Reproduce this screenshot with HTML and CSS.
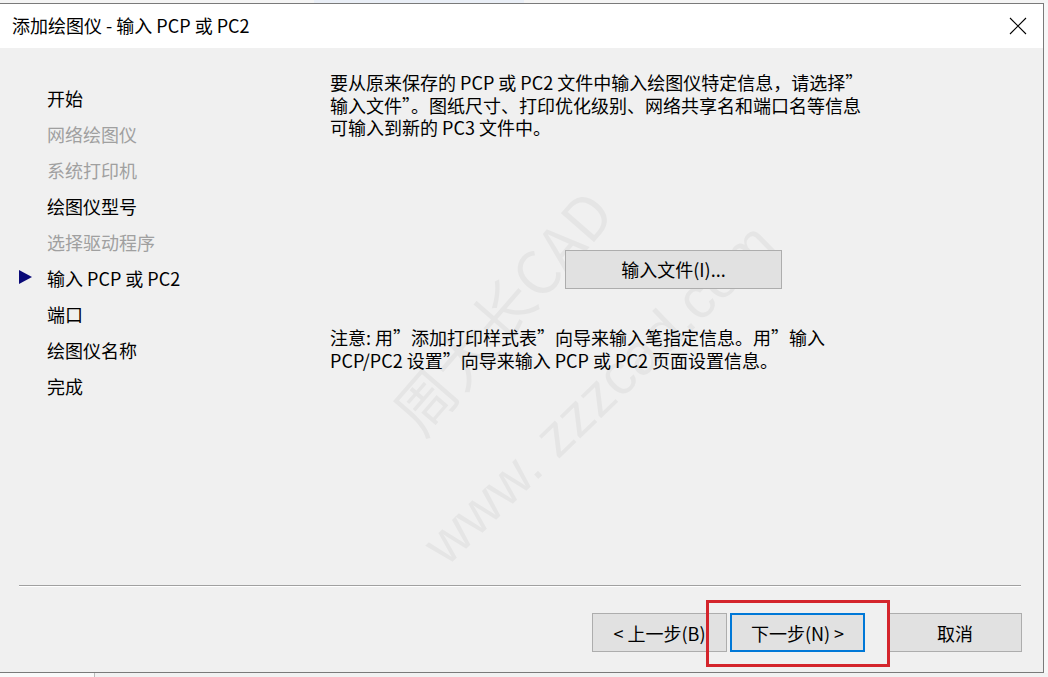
FILE: index.html
```html
<!DOCTYPE html>
<html lang="zh-CN">
<head>
<meta charset="utf-8">
<title>添加绘图仪 - 输入 PCP 或 PC2</title>
<link rel="stylesheet" href="styles.css">
</head>
<body>
<div class="screen">
  <div class="topstrip"></div>
  <div class="row">
    <div class="dialog">
      <div class="titlebar">
        <span class="title">添加绘图仪 - 输入 PCP 或 PC2</span>
        <span class="close">
          <svg width="18" height="18" viewBox="0 0 18 18"><path d="M1 1 L17 17 M17 1 L1 17" stroke="#000" stroke-width="1.1" fill="none"/></svg>
        </span>
      </div>
      <div class="body">
        <div class="watermark wm1">周大长CAD</div>
        <div class="watermark wm2">www. zzzcad.com</div>
        <div class="main">
          <ul class="nav">
            <li class="item"><span class="marker"></span>开始</li>
            <li class="item disabled"><span class="marker"></span>网络绘图仪</li>
            <li class="item disabled"><span class="marker"></span>系统打印机</li>
            <li class="item"><span class="marker"></span>绘图仪型号</li>
            <li class="item disabled"><span class="marker"></span>选择驱动程序</li>
            <li class="item current"><span class="marker"><svg width="13" height="14" viewBox="0 0 13 14"><polygon points="0,0 13,7 0,14" fill="#0a0a78"/></svg></span>输入 PCP 或 PC2</li>
            <li class="item"><span class="marker"></span>端口</li>
            <li class="item"><span class="marker"></span>绘图仪名称</li>
            <li class="item"><span class="marker"></span>完成</li>
          </ul>
          <div class="content">
            <p class="intro">要从原来保存的 PCP 或 PC2 文件中输入绘图仪特定信息，请选择”<br>输入文件”。图纸尺寸、打印优化级别、网络共享名和端口名等信息<br>可输入到新的 PC3 文件中。</p>
            <button class="btn import">输入文件(I)...</button>
            <p class="note">注意: 用”添加打印样式表”向导来输入笔指定信息。用”输入<br>PCP/PC2 设置”向导来输入 PCP 或 PC2 页面设置信息。</p>
          </div>
        </div>
        <div class="sep"></div>
        <div class="actions">
          <button class="btn">&lt; 上一步(B)</button>
          <button class="btn default">下一步(N) &gt;</button>
          <button class="btn cancel">取消</button>
        </div>
        <div class="highlight"></div>
      </div>
    </div>
    <div class="edge"></div>
  </div>
  <div class="bottomstrip"><div class="bs-left"></div><div class="bs-right"></div></div>
</div>
</body>
</html>
```
FILE: styles.css
```css
* { box-sizing: border-box; }
html, body { margin: 0; padding: 0; background: #fff; }
body {
  font-family: "Noto Sans CJK SC", "Microsoft YaHei", sans-serif;
  font-size: 18px;
  color: #000;
}
.screen {
  width: 1048px;
  height: 677px;
  display: flex;
  flex-direction: column;
  overflow: hidden;
}
.topstrip {
  height: 3px;
  background: linear-gradient(90deg, #f4f4f4 0 30%, #e9eef6 30% 50%, #f4f4f4 50% 100%);
}
.row { display: flex; height: 670px; }
.dialog {
  width: 1044px;
  height: 670px;
  border-top: 1px solid #7a7a7a;
  border-right: 1px solid #7a7a7a;
  border-bottom: 1px solid #7a7a7a;
  display: flex;
  flex-direction: column;
  background: #f0f0f0;
}
.edge { flex: 1; background: #f7f7f7; }
.titlebar {
  height: 44px;
  background: #fff;
  display: flex;
  align-items: center;
  justify-content: space-between;
  padding: 0 16px 3px 12px;
}
.title { font-size: 18px; line-height: 24px; }
.close { width: 18px; height: 18px; display: block; margin-top: 3px; }
.close svg { display: block; }
.body {
  position: relative;
  height: 624px;
  display: flex;
  flex-direction: column;
}
.main { height: 537px; display: flex; position: relative; z-index: 1; }
.nav {
  list-style: none;
  margin: 0;
  padding: 32px 0 0 19px;
  width: 330px;
}
.item {
  height: 36px;
  display: flex;
  align-items: center;
  line-height: 36px;
}
.item.disabled { color: #a0a0a0; }
.marker { width: 28px; height: 36px; display: flex; align-items: center; padding-bottom: 2px; }
.marker svg { display: block; }
.content { padding-top: 23px; }
.intro { margin: 0; line-height: 22.5px; }
.btn {
  font-family: inherit;
  font-size: 18px;
  color: #000;
  background: #e1e1e1;
  border: 1px solid #adadad;
  height: 39px;
  padding: 0;
  border-radius: 0;
}
.import {
  display: block;
  width: 217px;
  margin: 111px 0 0 235px;
}
.note { margin: 37px 0 0; line-height: 23px; }
.sep {
  margin-left: 19px;
  width: 1002px;
  height: 2px;
  border-top: 1px solid #a0a0a0;
  border-bottom: 1px solid #fff;
  position: relative;
  z-index: 1;
}
.actions {
  display: flex;
  justify-content: flex-end;
  margin-top: 26px;
  padding-right: 21px;
  gap: 3px;
  position: relative;
  z-index: 1;
}
.actions .btn { width: 135px; }
.actions .default { border: 2px solid #0078d7; }
.actions .cancel { width: 134px; margin-left: 20px; }
.highlight {
  position: absolute;
  left: 706px;
  top: 552px;
  width: 184px;
  height: 67px;
  border: 3px solid #d4252c;
  z-index: 2;
}
.watermark {
  position: absolute;
  color: rgba(0, 0, 0, 0.045);
  white-space: nowrap;
  z-index: 0;
}
.wm1 {
  left: 500px;
  top: 262px;
  font-size: 60px;
  transform: translate(-50%, -50%) rotate(-49deg);
}
.wm2 {
  left: 598px;
  top: 345px;
  font-family: "Liberation Sans", sans-serif;
  font-size: 58px;
  transform: translate(-50%, -50%) rotate(-44deg);
}
.bottomstrip { height: 4px; display: flex; }
.bs-left { width: 95px; background: #fafafa; border-right: 1px solid #bbb; }
.bs-right { flex: 1; background: #f2f2f2; }
```
